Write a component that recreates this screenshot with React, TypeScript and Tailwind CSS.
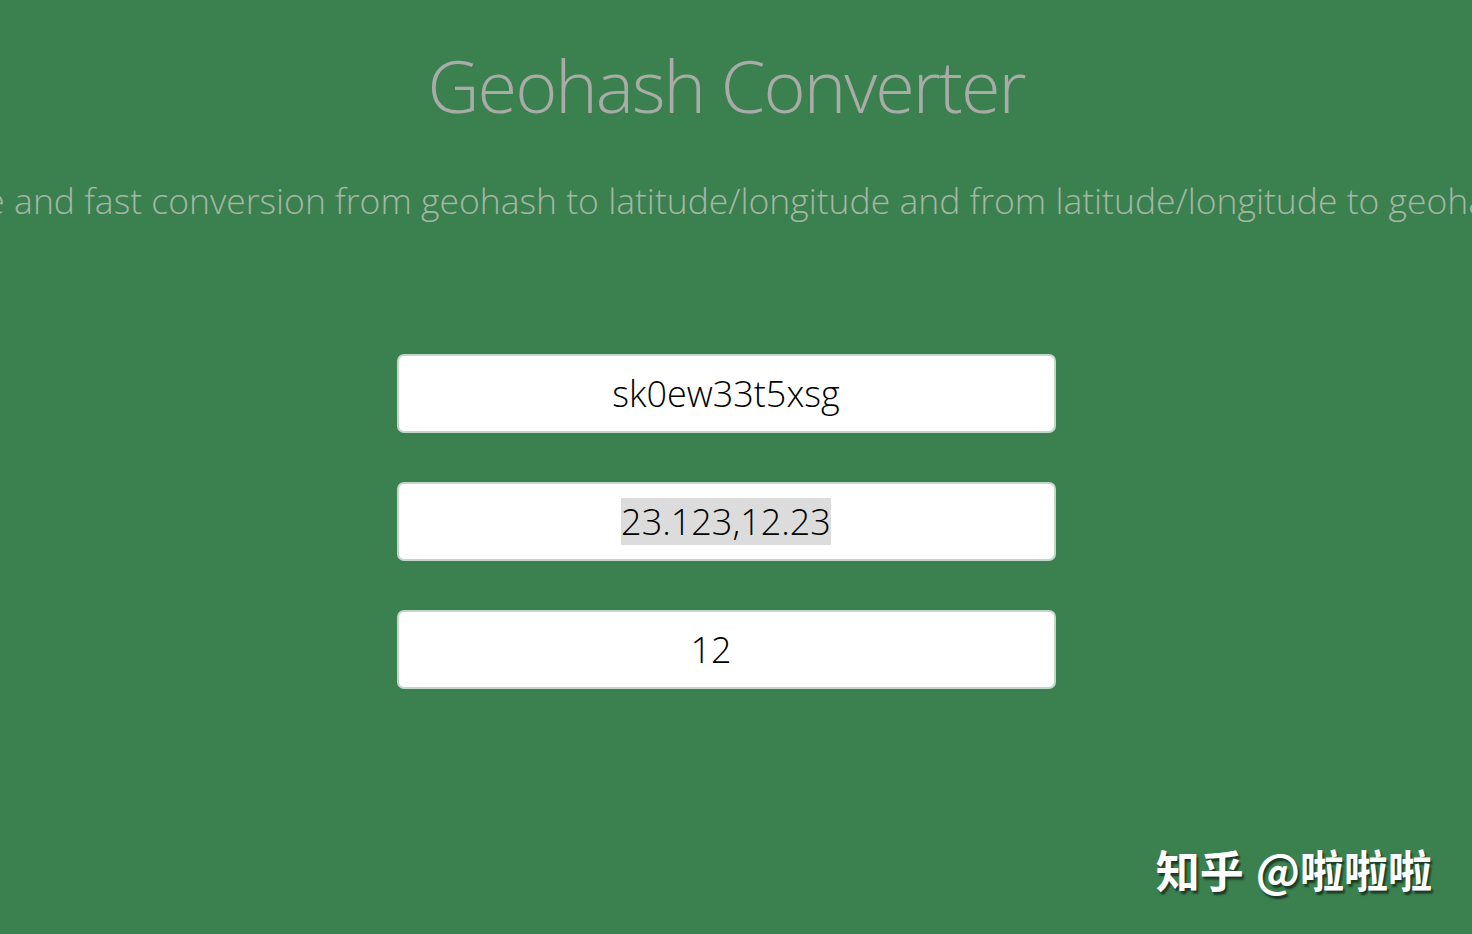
import React from "react";

export default function App() {
  const font = { fontFamily: '"Open Sans", "Noto Sans", sans-serif' };
  return (
    <div className="w-[1472px] h-[934px] bg-[#3b8150] overflow-hidden relative" style={font}>
      <div className="w-[1452px] flex flex-col items-center">
        <h1 className="mt-[40px] text-[72px] leading-[90px] tracking-[-2px] font-light text-[#a9aba6] whitespace-nowrap">
          Geohash Converter
        </h1>
        <div className="w-[1492px] shrink-0 flex justify-center overflow-hidden mt-[45px] pr-[30px]">
          <p className="text-[35.5px] leading-[50px] font-light text-[#a6b6a5] whitespace-nowrap shrink-0">
            Simple and fast conversion from geohash to latitude/longitude and from latitude/longitude to geohash
          </p>
        </div>
        <div className="mt-[129px] flex flex-col gap-[49px]">
          <div className="w-[659px] h-[79px] bg-white border-2 border-[#c3d6c7] rounded-[7px] flex items-center justify-center text-[36px] font-light text-black">
            sk0ew33t5xsg
          </div>
          <div className="w-[659px] h-[79px] bg-white border-2 border-[#c3d6c7] rounded-[7px] flex items-center justify-center text-[36px] font-light text-black">
            <span className="bg-[#dcdcdc] leading-[47px]">23.123,12.23</span>
          </div>
          <div className="w-[659px] h-[79px] bg-white border-2 border-[#c3d6c7] rounded-[7px] flex items-center justify-center pr-[30px] text-[36px] font-light text-black">
            12
          </div>
        </div>
      </div>
      <div
        className="absolute right-[40px] top-[836px] flex gap-[12px] text-[44px] font-bold text-white whitespace-nowrap"
        style={{ fontFamily: '"Noto Sans CJK SC", "Noto Sans", sans-serif', textShadow: "2px 3px 2px rgba(0,0,0,0.55)" }}
      >
        <span>知乎</span>
        <span>@啦啦啦</span>
      </div>
    </div>
  );
}
